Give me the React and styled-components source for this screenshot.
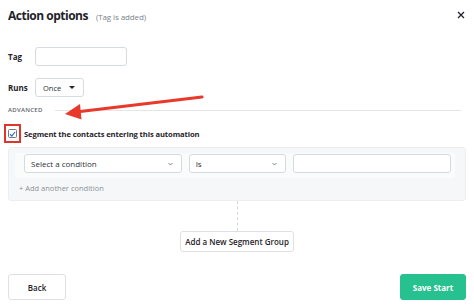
import React from 'react';
import styled, { createGlobalStyle } from 'styled-components';

const GlobalStyle = createGlobalStyle`
  html, body {
    margin: 0;
    padding: 0;
    background: #fff;
  }
  body {
    font-family: "Open Sans", "Noto Sans", sans-serif;
    color: #1f2329;
  }
`;

const Modal = styled.div`
  position: relative;
  width: 474px;
  height: 306px;
  box-sizing: border-box;
  padding: 6px 8px 0 8px;
  display: flex;
  flex-direction: column;
`;

const Header = styled.header`
  display: flex;
  align-items: center;
  justify-content: space-between;
  height: 18px;
`;

const TitleGroup = styled.div`
  display: flex;
  align-items: baseline;
  gap: 8px;
`;

const Title = styled.h1`
  margin: 0;
  font-size: 12px;
  font-weight: 700;
  letter-spacing: -0.5px;
  transform: scaleY(1.06);
`;

const Subtitle = styled.span`
  font-size: 8px;
  color: #7b8289;
  letter-spacing: -0.1px;
`;

const Close = styled.button`
  border: 0;
  background: none;
  padding: 0;
  width: 10px;
  height: 10px;
  display: flex;
  align-items: center;
  justify-content: center;
  cursor: pointer;
`;

const FieldRow = styled.div`
  display: flex;
  align-items: center;
  margin-top: ${p => p.$top}px;
`;

const Label = styled.label`
  width: 27px;
  font-size: 8px;
  font-weight: 700;
`;

const TextInput = styled.div`
  box-sizing: border-box;
  width: ${p => p.$w}px;
  height: ${p => p.$h || 19}px;
  border: 1px solid #d6dbe0;
  border-radius: 3px;
  background: #fff;
`;

const Select = styled.div`
  box-sizing: border-box;
  width: ${p => p.$w}px;
  height: ${p => p.$h || 19}px;
  border: 1px solid #d6dbe0;
  border-radius: 3px;
  background: #fff;
  display: flex;
  align-items: center;
  justify-content: space-between;
  padding: 0 8px 0 ${p => p.$pl || 7}px;
  font-size: ${p => p.$size || 7.5}px;
  color: #2a2f35;
`;

const Caret = styled.span`
  width: 0;
  height: 0;
  border-left: 3px solid transparent;
  border-right: 3px solid transparent;
  border-top: 3.5px solid #1f2329;
`;

const Chevron = styled.svg`
  width: 5px;
  height: 4px;
`;

const SectionHead = styled.div`
  display: flex;
  align-items: center;
  gap: 12px;
  margin-top: 9px;
  padding-right: 5px;
`;

const SectionLabel = styled.span`
  font-size: 6px;
  font-weight: 600;
  letter-spacing: 0.3px;
  color: #5d646b;
`;

const Rule = styled.div`
  flex: 1;
  height: 1px;
  background: #e3e6e9;
`;

const CheckRow = styled.div`
  display: flex;
  align-items: center;
  gap: 3px;
  margin-top: 10px;
  margin-left: -4px;
`;

const Highlight = styled.div`
  box-sizing: border-box;
  width: 17px;
  height: 19px;
  border: 2px solid #e0352b;
  display: flex;
  align-items: center;
  justify-content: center;
`;

const Checkbox = styled.div`
  box-sizing: border-box;
  width: 9px;
  height: 9px;
  border: 1px solid #6e7a85;
  border-radius: 1.5px;
  background: #fff;
  display: flex;
  align-items: center;
  justify-content: center;
`;

const CheckText = styled.span`
  font-size: 7.6px;
  font-weight: 700;
  letter-spacing: -0.1px;
`;

const Panel = styled.div`
  margin-top: 4px;
  box-sizing: border-box;
  width: 458px;
  height: 54px;
  background: #f6f7f8;
  border: 1px solid #eceef0;
  border-radius: 3px;
  padding: 5px 10px 0 6px;
`;

const ConditionRow = styled.div`
  display: flex;
  align-items: center;
  gap: 7px;
  padding: 1px 4px 5px 9px;
  background: #fafbfb;
  border-radius: 2px;
`;

const AddCondition = styled.div`
  margin-top: 5px;
  padding-left: 4px;
  font-size: 7.5px;
  color: #8a9198;
`;

const Connector = styled.div`
  display: flex;
  flex-direction: column;
  align-items: center;
`;

const Dotted = styled.div`
  width: 0;
  height: 30px;
  border-left: 1px dashed #d3d7db;
`;

const Button = styled.button`
  box-sizing: border-box;
  font-family: inherit;
  font-size: ${p => p.$size || 8}px;
  font-weight: ${p => p.$weight || 600};
  height: ${p => p.$h}px;
  width: ${p => p.$w}px;
  border-radius: 3px;
  border: 1px solid ${p => (p.$primary ? '#27c08f' : '#dde1e5')};
  background: ${p => (p.$primary ? '#27c08f' : '#fff')};
  color: ${p => (p.$primary ? '#fff' : '#1f2329')};
  padding: 0;
  cursor: pointer;
`;

const Footer = styled.footer`
  display: flex;
  justify-content: space-between;
  margin-top: 22px;
`;

const Arrow = styled.svg`
  position: absolute;
  left: 60px;
  top: 92px;
  width: 150px;
  height: 28px;
  pointer-events: none;
`;

export default function App() {
  return (
    <>
      <GlobalStyle />
      <Modal>
        <Header>
          <TitleGroup>
            <Title>Action options</Title>
            <Subtitle>(Tag is added)</Subtitle>
          </TitleGroup>
          <Close aria-label="Close">
            <svg width="8" height="8" viewBox="0 0 8 8">
              <path d="M1 1L7 7M7 1L1 7" stroke="#1f2329" strokeWidth="1.3" />
            </svg>
          </Close>
        </Header>

        <FieldRow $top={23}>
          <Label>Tag</Label>
          <TextInput $w={92} />
        </FieldRow>
        <FieldRow $top={12}>
          <Label>Runs</Label>
          <Select $w={49}>
            <span>Once</span>
            <Caret />
          </Select>
        </FieldRow>

        <SectionHead>
          <SectionLabel>ADVANCED</SectionLabel>
          <Rule />
        </SectionHead>

        <CheckRow>
          <Highlight>
            <Checkbox>
              <svg width="7" height="6" viewBox="0 0 7 6">
                <path d="M1 3.2L2.8 5L6 1" fill="none" stroke="#2c6fb7" strokeWidth="1.2" />
              </svg>
            </Checkbox>
          </Highlight>
          <CheckText>Segment the contacts entering this automation</CheckText>
        </CheckRow>

        <Panel>
          <ConditionRow>
            <Select $w={158} $h={19} $size={8} $pl={6}>
              <span>Select a condition</span>
              <Chevron viewBox="0 0 5 4">
                <path d="M0.5 1L2.5 3L4.5 1" fill="none" stroke="#6b737b" strokeWidth="0.9" />
              </Chevron>
            </Select>
            <Select $w={98} $h={19} $size={8} $pl={6}>
              <span>Is</span>
              <Chevron viewBox="0 0 5 4">
                <path d="M0.5 1L2.5 3L4.5 1" fill="none" stroke="#6b737b" strokeWidth="0.9" />
              </Chevron>
            </Select>
            <TextInput $w={158} />
          </ConditionRow>
          <AddCondition>+ Add another condition</AddCondition>
        </Panel>

        <Connector>
          <Dotted />
          <Button $w={114} $h={21}>Add a New Segment Group</Button>
        </Connector>

        <Footer>
          <Button $w={58} $h={26}>Back</Button>
          <Button $primary $w={66} $h={26} $weight={700}>Save Start</Button>
        </Footer>

        <Arrow viewBox="0 0 150 28">
          <path d="M142 5L16 20" stroke="#e8392b" strokeWidth="3.2" strokeLinecap="round" />
          <path d="M5 22L20 12L21.5 27.5Z" fill="#e8392b" />
        </Arrow>
      </Modal>
    </>
  );
}
